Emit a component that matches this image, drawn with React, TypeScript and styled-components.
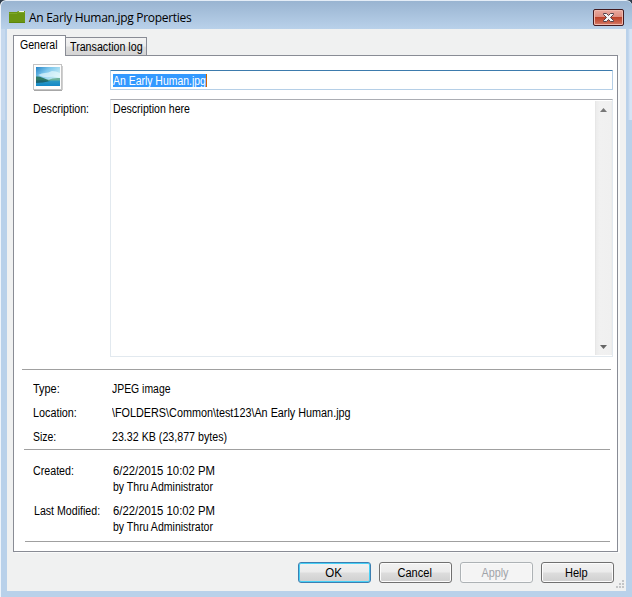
import React from "react";
import styled, { createGlobalStyle } from "styled-components";

const GlobalStyle = createGlobalStyle`
  * { box-sizing: border-box; }
  body { margin: 0; width: 632px; height: 597px; overflow: hidden; background: #2e3b4a; }
`;

const Window = styled.div`
  display: flex;
  flex-direction: column;
  width: 632px;
  height: 597px;
  padding: 0 6px 6px 6px;
  border-left: 1px solid #eef4fb;
  border-top: 1px solid #e4edf7;
  border-radius: 6px 6px 0 0;
  background:
    linear-gradient(#99b4d1, #b9d1ea 28px, transparent 28px),
    linear-gradient(90deg, #c6d9ee 0 4px, transparent 4px calc(100% - 4px), #d5e4f5 calc(100% - 2px)) 0 28px / 100% 91px no-repeat,
    #b9d1ea;
  font: 12px/16px "Liberation Sans", Arial, sans-serif;
  color: #000;
`;

const TitleBar = styled.div`
  display: flex;
  align-items: flex-start;
  height: 28px;
  flex: none;
  padding: 8px 2px 0 2px;
`;

const FolderIcon = styled.svg`
  display: block;
  margin-top: 1px;
`;

const Title = styled.div`
  flex: 1;
  margin-left: 4px;
  font: 12px/18px "Open Sans", "Noto Sans", sans-serif;
  letter-spacing: -0.3px;
  white-space: nowrap;
`;

const CloseButton = styled.button`
  display: flex;
  align-items: center;
  justify-content: center;
  width: 31px;
  height: 17px;
  padding: 0;
  border: 1px solid #431b20;
  border-radius: 2px;
  background: linear-gradient(#eaa99e, #dc8d80 47%, #bd4229 50%, #c9604a 80%, #d98270);
  box-shadow: inset 0 0 0 1px #efb9ae;
`;

const Client = styled.div`
  flex: 1;
  display: flex;
  flex-direction: column;
  padding: 6px 6px 0 6px;
  background: #f0f1f1;
`;

const Tabs = styled.div`
  display: flex;
  align-items: flex-end;
  height: 20px;
`;

const Tab = styled.div<{ $active?: boolean }>`
  position: relative;
  z-index: ${(p) => (p.$active ? 1 : 0)};
  width: ${(p) => (p.$active ? 53 : 82)}px;
  height: ${(p) => (p.$active ? 21 : 18)}px;
  margin: ${(p) => (p.$active ? "0 0 -1px 0" : "0 0 0 -1px")};
  padding: ${(p) => (p.$active ? "1px 0 0 6px" : "1px 0 0 4px")};
  border: 1px solid #898c95;
  border-bottom: 0;
  background: ${(p) => (p.$active ? "#fff" : "linear-gradient(#f3f3f3, #ebebeb 48%, #dddddd 52%, #d4d4d4)")};
`;

const Text = styled.span<{ $narrow?: number; $centered?: boolean }>`
  display: block;
  transform: scaleX(${(p) => p.$narrow ?? 0.885});
  transform-origin: ${(p) => (p.$centered ? "center" : "left")};
  white-space: pre;
`;

const Panel = styled.div`
  display: flex;
  flex-direction: column;
  width: 605px;
  height: 497px;
  padding: 8px 4px 0 8px;
  border: 1px solid #898c95;
  background: #fff;
  box-shadow: 2px 1px 0 #fafbfb;
`;

const NameRow = styled.div`
  display: flex;
  height: 35px;
  padding-left: 11px;
`;

const NameInput = styled.div`
  display: flex;
  align-items: center;
  width: 503px;
  height: 20px;
  margin: 6px 0 0 47px;
  padding-left: 2px;
  border: 1px solid #b5cfe7;
  border-top-color: #3d7bad;
  border-radius: 1px;
`;

const Selection = styled.div`
  height: 13px;
  width: 94px;
  border-right: 1px solid #cc6600;
  background: #3399ff;
  color: #fff;
  line-height: 14px;
`;

const DescriptionRow = styled.div`
  display: grid;
  grid-template-columns: 77px 503px;
  height: 258px;
  padding-left: 11px;
`;

const Label = styled.div`
  padding-top: 2px;
`;

const DescriptionBox = styled.div`
  display: flex;
  justify-content: space-between;
  padding: 1px 0 0 2px;
  border: 1px solid #e2e9ef;
  border-top-color: #abadb3;
`;

const ScrollBar = styled.div`
  display: flex;
  flex-direction: column;
  align-items: center;
  justify-content: space-between;
  width: 17px;
  height: 254px;
  padding: 7px 0 6px;
  border-left: 1px solid #e7e7e7;
  border-right: 1px solid #ececec;
  background: linear-gradient(90deg, #ececec, #f1f1f1 25%, #f0f0f0);
`;

const Rule = styled.div<{ $left: number; $top: number; $width: number }>`
  flex: none;
  width: ${(p) => p.$width}px;
  height: 1px;
  margin: ${(p) => p.$top}px 0 0 ${(p) => p.$left}px;
  background: #a0a0a0;
`;

const Details = styled.div<{ $top: number; $gap: number }>`
  display: flex;
  flex-direction: column;
  gap: ${(p) => p.$gap}px;
  padding: ${(p) => p.$top}px 0 0 11px;
`;

const DetailRow = styled.div<{ $value: number; $indent?: number }>`
  display: grid;
  grid-template-columns: ${(p) => p.$value - (p.$indent ?? 0)}px 1fr;
  padding-left: ${(p) => p.$indent ?? 0}px;
`;

const Footer = styled.div`
  display: flex;
  justify-content: flex-end;
  gap: 8px;
  padding: 10px 6px 0 0;
`;

const buttonBorder = { normal: "#707070", primary: "#3c7fb1", disabled: "#adb2b5" };
const buttonGlow = { normal: "#fcfcfc", primary: "#48d0f6", disabled: "#fafafa" };

const Button = styled.button<{ $kind: "normal" | "primary" | "disabled" }>`
  display: flex;
  align-items: center;
  justify-content: center;
  width: 73px;
  height: 21px;
  padding: 1px 2px 0 0;
  border: 1px solid ${(p) => buttonBorder[p.$kind]};
  border-radius: 3px;
  background: ${(p) =>
    p.$kind === "disabled" ? "#f4f4f4" : "linear-gradient(#f2f2f2, #ebebeb 48%, #dddddd 52%, #cfcfcf)"};
  box-shadow: inset 0 0 0 1px ${(p) => buttonGlow[p.$kind]};
  color: ${(p) => (p.$kind === "disabled" ? "#a0a3a8" : "#000")};
  font: inherit;
`;

const Grip = styled.svg`
  display: block;
  flex: none;
  align-self: flex-end;
  margin: -3px -4px 0 0;
`;

const Picture = () => (
  <svg width="30" height="27" viewBox="0 0 30 27">
    <defs>
      <linearGradient id="sky" x1="0" y1="0" x2="1" y2=".6">
        <stop offset="0" stopColor="#2583c6" />
        <stop offset=".45" stopColor="#7cc6ec" />
        <stop offset="1" stopColor="#c9eef5" />
      </linearGradient>
      <linearGradient id="sea" x1="0" y1="0" x2="0" y2="1">
        <stop offset="0" stopColor="#2f9cc4" />
        <stop offset="1" stopColor="#1287c8" />
      </linearGradient>
    </defs>
    <path d="M1 26.5h28" stroke="#a7a7a7" />
    <rect x=".5" y=".5" width="28" height="25" fill="#fdfdfd" stroke="#c3c3c3" />
    <path d="M29.5 2v24" stroke="#d0d0d0" />
    <path fill="url(#sky)" d="M3 3h24v13H3z" />
    <path fill="url(#sea)" d="M3 16h24v6H3z" />
    <path d="M5 11q4-2 7-2t7-2q4 0 8 2v5q-6-2-11-1t-11-2z" fill="#e9fafd" opacity=".65" />
    <path d="M3 12.5q3-.5 6 1l5 2 4 1q-8 2-15 1z" fill="#2f7a66" />
    <path d="M3 16.500q7-.5 14 .5l-7 1.500-7 .5z" fill="#1b6470" />
    <path d="M15 16q5-2.500 12-2v2.500H15z" fill="#6fb39c" />
  </svg>
);

export default function App() {
  return (
    <>
      <GlobalStyle />
      <Window>
        <TitleBar>
          <FolderIcon width="16" height="14" viewBox="0 0 16 14">
            <path d="M0 2h8l1-1h7v12H0z" fill="#6b9514" />
            <path d="M9.500 2l1-1H15v1z" fill="#f7faef" />
            <path d="M0 3.500h8l1-1h7" stroke="#7ba72a" fill="none" />
            <path d="M0 12.500h16" stroke="#5b850c" />
          </FolderIcon>
          <Title>An Early Human.jpg Properties</Title>
          <CloseButton aria-label="Close">
            <svg width="13" height="11" viewBox="0 0 13 11">
              <path d="M1.5 1.5h3l2 2 2-2h3v1l-3 3 3 3v1h-3l-2-2-2 2h-3v-1l3-3-3-3z" fill="#f5f5f5" stroke="#55424a" />
            </svg>
          </CloseButton>
        </TitleBar>
        <Client>
          <Tabs>
            <Tab $active><Text $narrow={0.88}>General</Text></Tab>
            <Tab><Text $narrow={0.89}>Transaction log</Text></Tab>
          </Tabs>
          <Panel>
            <NameRow>
              <Picture />
              <NameInput>
                <Selection><Text $narrow={0.87}>An Early Human.jpg</Text></Selection>
              </NameInput>
            </NameRow>
            <DescriptionRow>
              <Label><Text>Description:</Text></Label>
              <DescriptionBox>
                <Text $narrow={0.88}>Description here</Text>
                <ScrollBar>
                  <svg width="7" height="4" viewBox="0 0 7 4"><path d="M0 4L3.5 0 7 4z" fill="#777" /></svg>
                  <svg width="7" height="4" viewBox="0 0 7 4"><path d="M0 0h7L3.5 4z" fill="#666" /></svg>
                </ScrollBar>
              </DescriptionBox>
            </DescriptionRow>
            <Rule $left={0} $top={12} $width={589} />
            <Details $top={11} $gap={8}>
              <DetailRow $value={79}><Text $narrow={0.91}>Type:</Text><Text $narrow={0.868}>JPEG image</Text></DetailRow>
              <DetailRow $value={79}><Text $narrow={0.9}>Location:</Text><Text $narrow={0.901}>{"\\FOLDERS\\Common\\test123\\An Early Human.jpg"}</Text></DetailRow>
              <DetailRow $value={79}><Text $narrow={0.87}>Size:</Text><Text $narrow={0.889}>23.32 KB (23,877 bytes)</Text></DetailRow>
            </Details>
            <Rule $left={2} $top={4} $width={586} />
            <Details $top={13} $gap={8}>
              <DetailRow $value={80}>
                <Text $narrow={0.89}>Created:</Text>
                <div><Text $narrow={0.944}>6/22/2015 10:02 PM</Text><Text $narrow={0.878}>by Thru Administrator</Text></div>
              </DetailRow>
              <DetailRow $value={80} $indent={1}>
                <Text>Last Modified:</Text>
                <div><Text $narrow={0.944}>6/22/2015 10:02 PM</Text><Text $narrow={0.878}>by Thru Administrator</Text></div>
              </DetailRow>
            </Details>
            <Rule $left={3} $top={6} $width={585} />
          </Panel>
          <Footer>
            <Button $kind="primary"><Text $centered $narrow={0.96}>OK</Text></Button>
            <Button $kind="normal"><Text $centered $narrow={0.92}>Cancel</Text></Button>
            <Button $kind="disabled"><Text $centered $narrow={0.9}>Apply</Text></Button>
            <Button $kind="normal"><Text $centered $narrow={0.92}>Help</Text></Button>
          </Footer>
          <Grip width="8" height="8" viewBox="0 0 8 8">
            <path d="M6 0h2v2H6zM3 3h2v2H3zM6 3h2v2H6zM0 6h2v2H0zM3 6h2v2H3zM6 6h2v2H6z" fill="#c3c5c7" />
          </Grip>
        </Client>
      </Window>
    </>
  );
}
